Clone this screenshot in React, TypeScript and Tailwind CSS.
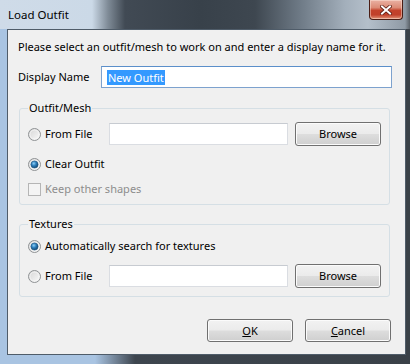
import React from "react";

function Radio({ checked }: { checked?: boolean }) {
  return (
    <svg width="13" height="13" viewBox="0 0 13 13" className="shrink-0">
      <defs>
        <linearGradient id="rgOuter" x1="0" y1="0" x2="1" y2="1">
          <stop offset="0" stopColor="#d4d4d4" />
          <stop offset="1" stopColor="#fbfbfb" />
        </linearGradient>
        <radialGradient id="rgDot" cx="0.4" cy="0.35" r="0.7">
          <stop offset="0" stopColor="#8fd0f5" />
          <stop offset="0.45" stopColor="#2d7fbd" />
          <stop offset="1" stopColor="#0f3f66" />
        </radialGradient>
      </defs>
      <circle cx="6.5" cy="6.5" r="6" fill="url(#rgOuter)" stroke="#8f9294" strokeWidth="1" />
      <circle cx="6.5" cy="6.5" r="4.5" fill="none" stroke="#f6f6f6" strokeWidth="1" opacity="0.7" />
      {checked && <circle cx="6.5" cy="6.5" r="3.6" fill="url(#rgDot)" stroke="#1c5683" strokeWidth="0.6" />}
    </svg>
  );
}

function Checkbox() {
  return (
    <div className="w-[13px] h-[13px] shrink-0 border border-[#b5b5b5] bg-[#f4f4f4]" />
  );
}

function WinButton({ children, w = "w-[86px]", h = "h-[24px]" }: { children: React.ReactNode; w?: string; h?: string }) {
  return (
    <div
      className={`${w} ${h} shrink-0 rounded-[3px] border border-[#707070] bg-[linear-gradient(to_bottom,#f2f2f2_0%,#ebebeb_48%,#dddddd_52%,#cfcfcf_100%)] shadow-[inset_0_0_0_1px_#fbfbfb] flex items-center justify-center text-black`}
    >
      {children}
    </div>
  );
}

function TextBox({ w = "w-[179px]" }: { w?: string }) {
  return (
    <div className={`${w} h-[22px] shrink-0 bg-white border border-[#dadde2] border-t-[#c7cbd1]`} />
  );
}

export default function App() {
  return (
    <div className="w-[410px] h-[364px] flex flex-col overflow-hidden text-[11px] leading-[16px] text-black whitespace-nowrap [font-family:'Noto_Sans',sans-serif] bg-[linear-gradient(to_right,#a9c4e2_0px,#a9c4e2_95px,#3d454e_135px,#3a4148_100%)]">
      {/* Title bar */}
      <div className="h-[29px] shrink-0 flex justify-between bg-[linear-gradient(to_right,#cfdbe8_0px,#cbd9e7_92px,#7f8b97_108px,#414a54_125px,#38414a_200px,#3e4750_255px,#6e7a86_300px,#a3afbb_345px,#b4bfca_368px,#8f9aa5_405px,#5a6168_410px)]">
        <div className="pl-[8px] pt-[7px] text-[11.5px] text-black">Load Outfit</div>
        <div className="mr-[7px] w-[34px] h-[20px] rounded-b-[4px] border border-t-0 border-[#4a1d14] bg-[linear-gradient(to_bottom,#eab1a3_0%,#dc8b76_40%,#c3422b_55%,#c0402a_78%,#e39478_100%)] shadow-[inset_0_0_0_1px_rgba(255,235,225,0.45)] flex items-center justify-center">
          <svg width="12" height="10" viewBox="0 0 12 10">
            <path d="M2 1.5 L10 8.5 M10 1.5 L2 8.5" stroke="#5a1c12" strokeWidth="3.6" strokeLinecap="square" />
            <path d="M2 1.5 L10 8.5 M10 1.5 L2 8.5" stroke="#ffffff" strokeWidth="2" strokeLinecap="square" />
          </svg>
        </div>
      </div>

      {/* Frame + client */}
      <div className="flex-1 flex pl-[7px] pr-[8px] pb-[9px]">
        <div className="flex-1 flex flex-col bg-[#f0f0f0] border border-[#4f5c69] pl-[10px] pr-[13px] pt-[9px]">
          <div>Please select an outfit/mesh to work on and enter a display name for it.</div>

          <div className="mt-[11px] flex items-center h-[22px]">
            <div className="w-[83px]">Display Name</div>
            <div className="w-[291px] h-[22px] bg-white border border-[#7da2ce] border-t-[#5b8fca] flex items-center pl-[5px]">
              <span className="bg-[#3399ff] text-white leading-[15px] px-[1px]">New Outfit</span>
            </div>
          </div>

          <fieldset className="mt-[12px] ml-[1px] w-[371px] border border-[#d5dfe5] rounded-[3px] px-[8px] pb-[7px] pt-[6px]">
            <legend className="ml-[0px] px-[1px] leading-[16px]">Outfit/Mesh</legend>
            <div className="flex items-center h-[24px]">
              <Radio />
              <div className="ml-[4px] w-[64px]">From File</div>
              <TextBox />
              <div className="ml-[7px]">
                <WinButton>Browse</WinButton>
              </div>
            </div>
            <div className="mt-[10px] flex items-center h-[16px]">
              <Radio checked />
              <div className="ml-[4px]">Clear Outfit</div>
            </div>
            <div className="mt-[9px] flex items-center h-[16px]">
              <Checkbox />
              <div className="ml-[4px] text-[#8d8d8d]">Keep other shapes</div>
            </div>
          </fieldset>

          <fieldset className="mt-[11px] ml-[1px] w-[371px] border border-[#d5dfe5] rounded-[3px] px-[8px] pb-[8px] pt-[6px]">
            <legend className="ml-[0px] px-[1px] leading-[16px]">Textures</legend>
            <div className="flex items-center h-[16px]">
              <Radio checked />
              <div className="ml-[4px]">Automatically search for textures</div>
            </div>
            <div className="mt-[10px] flex items-center h-[24px]">
              <Radio />
              <div className="ml-[4px] w-[64px]">From File</div>
              <TextBox />
              <div className="ml-[7px]">
                <WinButton>Browse</WinButton>
              </div>
            </div>
          </fieldset>

          <div className="mt-[22px] flex justify-end gap-[12px] pr-[1px]">
            <WinButton h="h-[23px]">
              <span><span className="underline">O</span>K</span>
            </WinButton>
            <WinButton h="h-[23px]">
              <span><span className="underline">C</span>ancel</span>
            </WinButton>
          </div>
        </div>
      </div>
    </div>
  );
}
